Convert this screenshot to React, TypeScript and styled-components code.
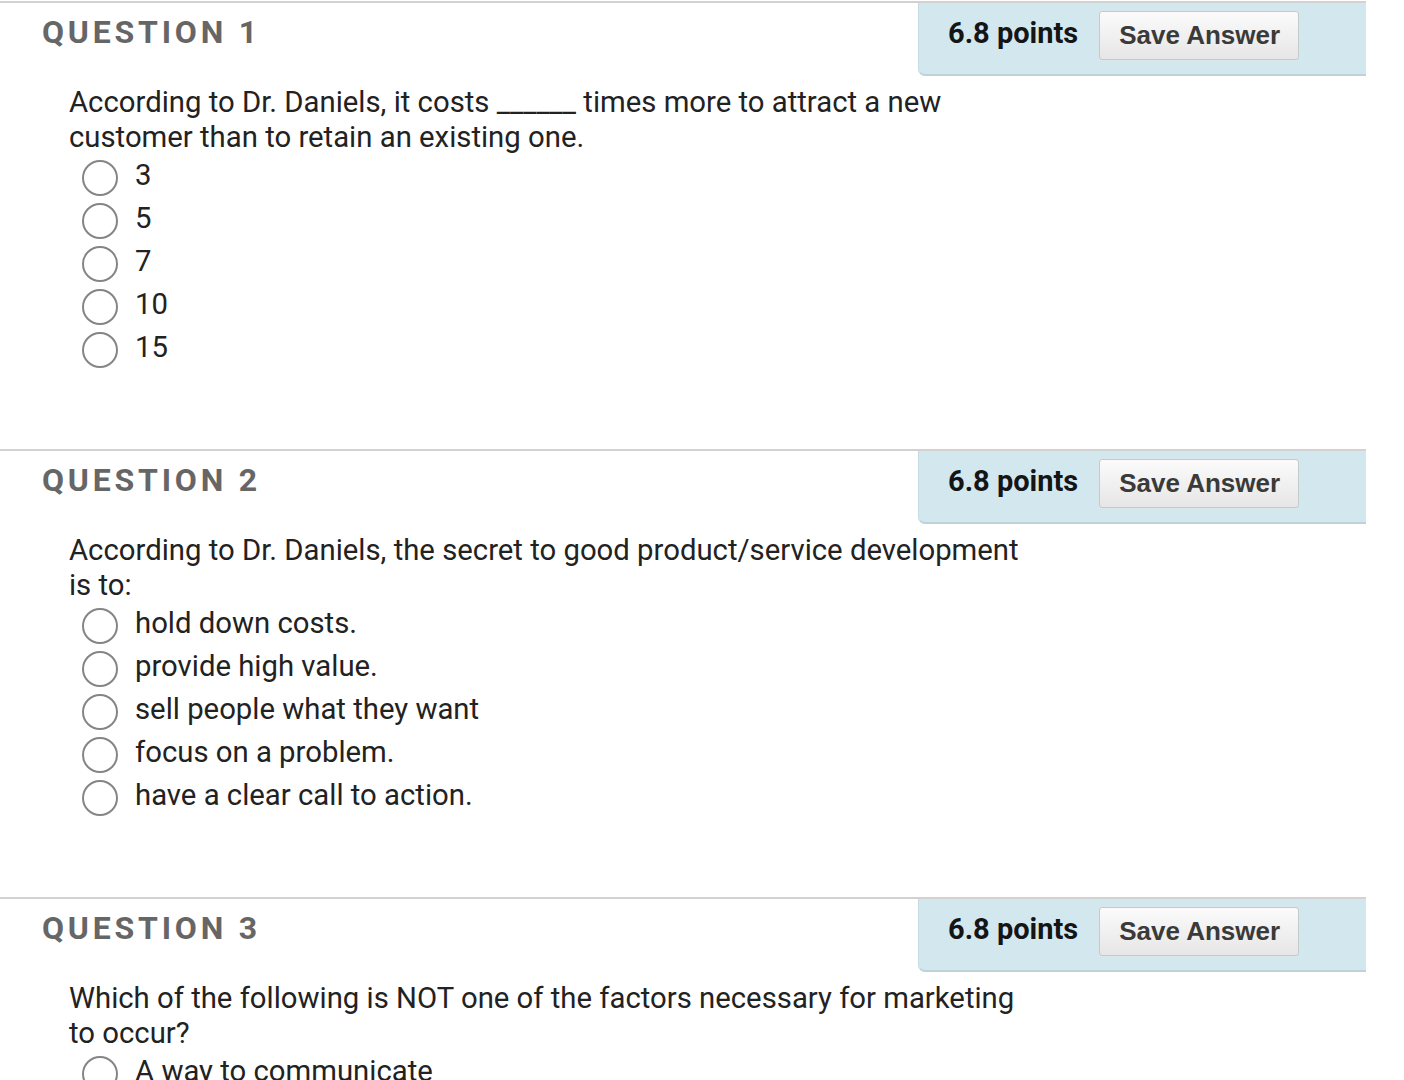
import React from 'react'
import styled, { createGlobalStyle } from 'styled-components';

const GlobalStyle = createGlobalStyle`
    html, body {
        margin: 0;
        padding: 0;
        background: #ffffff;
        font-family: Roboto, "Noto Sans", Arial, sans-serif;
        overflow: hidden;
    }
`

const Page = styled.div`
    width: 1366px;
    padding-top: 1px;
`

const QuestionSection = styled.section`
    border-top: 2px solid #d2d2d2;
    height: 446px;
`

const QuestionHeader = styled.div`
    display: flex;
    justify-content: space-between;
    align-items: flex-start;
`

const QuestionTitle = styled.h3`
    margin: 0;
    padding: 10px 0 0 42px;
    font-size: 32px;
    line-height: 38px;
    font-weight: 700;
    letter-spacing: 3.8px;
    color: #666666;
`

const PointsBox = styled.div`
    width: 448px;
    height: 73px;
    box-sizing: border-box;
    display: flex;
    align-items: flex-start;
    gap: 21px;
    padding: 8px 0 0 29px;
    background: #d3e8ee;
    border-bottom: 2px solid #bcd3da;
    border-left: 1px solid #c6dce3;
    border-bottom-left-radius: 7px;
`

const Points = styled.span`
    font-size: 29px;
    line-height: 44px;
    font-weight: 700;
    color: #151515;
`

const SaveButton = styled.button`
    height: 49px;
    padding: 0 18px 0 19px;
    font-family: "Liberation Sans", Arial, sans-serif;
    font-size: 26px;
    font-weight: 700;
    color: #3a3a3a;
    background: linear-gradient(#fbfbfb, #e6e6e6);
    border: 1px solid #c4c9cb;
    border-radius: 3px;
    box-shadow: 0 0 0 1px #dbe6ea;
`

const Prompt = styled.p`
    margin: 9px 0 0 69px;
    width: 960px;
    font-size: 29.3px;
    line-height: 35px;
    color: #222222;
`

const OptionList = styled.ul`
    list-style: none;
    margin: -1px 0 0 82px;
    padding: 0;
`

const OptionRow = styled.li`
    display: flex;
    align-items: center;
    gap: 17px;
    height: 43px;
`

const Radio = styled.input`
    appearance: none;
    margin: 0;
    width: 36px;
    height: 36px;
    box-sizing: border-box;
    border: 2.5px solid #858585;
    border-radius: 50%;
    background: #ffffff;
    flex-shrink: 0;
    position: relative;
    top: 2px;
`

const OptionLabel = styled.label`
    font-size: 29.3px;
    line-height: 35px;
    color: #222222;
`

interface IQuestion {
    id: number;
    text: string;
    options: string[];
}

const questions: IQuestion[] = [
    {
        id: 1,
        text: 'According to Dr. Daniels, it costs ______ times more to attract a new customer than to retain an existing one.',
        options: ['3', '5', '7', '10', '15'],
    },
    {
        id: 2,
        text: 'According to Dr. Daniels, the secret to good product/service development is to:',
        options: ['hold down costs.', 'provide high value.', 'sell people what they want', 'focus on a problem.', 'have a clear call to action.'],
    },
    {
        id: 3,
        text: 'Which of the following is NOT one of the factors necessary for marketing to occur?',
        options: ['A way to communicate', 'A product or service', 'Two or more parties', 'Something of value to exchange'],
    },
]

export default function App() {

    const items = questions.map((q: IQuestion) => <QuestionSection key={q.id}>
        <QuestionHeader>
            <QuestionTitle>QUESTION {q.id}</QuestionTitle>
            <PointsBox>
                <Points>6.8 points</Points>
                <SaveButton type="button">Save Answer</SaveButton>
            </PointsBox>
        </QuestionHeader>
        <Prompt>{q.text}</Prompt>
        <OptionList>
            {q.options.map((opt, i) => <OptionRow key={opt}>
                <Radio type="radio" name={`q${q.id}`} id={`q${q.id}-${i}`} />
                <OptionLabel htmlFor={`q${q.id}-${i}`}>{opt}</OptionLabel>
            </OptionRow>)}
        </OptionList>
    </QuestionSection>)

    return (
        <>
            <GlobalStyle />
            <Page>
                {items}
            </Page>
        </>
    )
}
